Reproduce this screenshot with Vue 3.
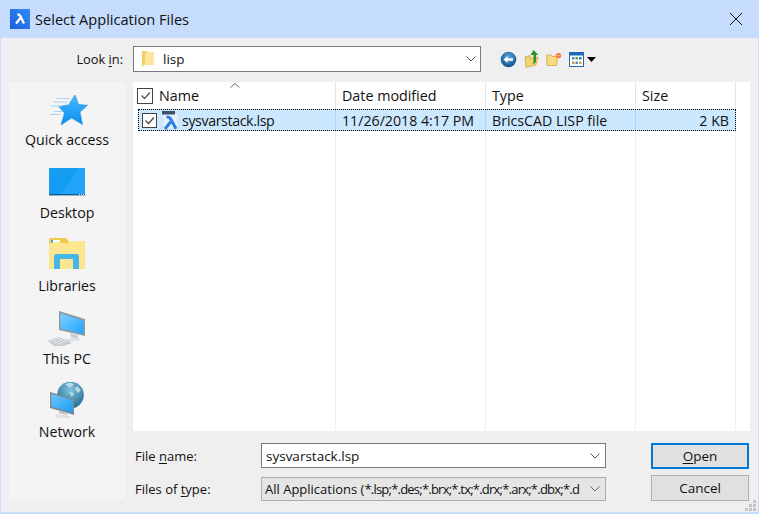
<script setup>
const places = [
  { id: 'quick', label: 'Quick access' },
  { id: 'desktop', label: 'Desktop' },
  { id: 'libraries', label: 'Libraries' },
  { id: 'pc', label: 'This PC' },
  { id: 'network', label: 'Network' }
]
</script>

<template>
  <div class="window">
    <header class="titlebar">
      <svg class="logo" width="20" height="20" viewBox="0 0 20 20">
        <defs>
          <linearGradient id="lg" x1="0" y1="1" x2="1" y2="0">
            <stop offset="0" stop-color="#1d5fe0" />
            <stop offset="1" stop-color="#2f8cf5" />
          </linearGradient>
        </defs>
        <rect width="20" height="20" fill="url(#lg)" />
        <path d="M7.500 5.500c2 0 2.500.8 3 1.800L14 14.500M10.500 9L6 14.500" stroke="#fff" stroke-width="2.300" fill="none" />
      </svg>
      <span class="title">Select Application Files</span>
      <svg class="close" width="14" height="14" viewBox="0 0 14 14">
        <path d="M1 1l12 12M13 1L1 13" stroke="#111" stroke-width="1" fill="none" />
      </svg>
    </header>

    <div class="content">
      <div class="lookin">
        <label class="lookin-label">Look <u>i</u>n:</label>
        <div class="combo lookin-combo">
          <svg class="folder" width="12" height="17" viewBox="0 0 12 17">
            <path d="M0 0h5l1 1.500h6V14H1.500L0 16.500z" fill="#f4cd66" />
            <path d="M3 1.500h9V14H3z" fill="#fde59c" />
          </svg>
          <span class="combo-text">lisp</span>
          <svg class="chev" width="10" height="6" viewBox="0 0 10 6">
            <path d="M.5.500L5 5 9.500.5" stroke="#555" fill="none" />
          </svg>
        </div>
        <div class="tools">
          <svg width="17" height="17" viewBox="0 0 17 17">
            <defs>
              <radialGradient id="bk" cx=".5" cy=".35" r=".7">
                <stop offset="0" stop-color="#5aa6e0" />
                <stop offset="1" stop-color="#0b4a86" />
              </radialGradient>
            </defs>
            <circle cx="8.500" cy="8.500" r="7.800" fill="url(#bk)" />
            <path d="M3.500 8.500l4-3.500v2.300h5.500v2.400H7.500V12z" fill="#fff" />
          </svg>
          <svg width="15" height="18" viewBox="0 0 15 18">
            <path d="M1 7l5-1.500V8l8-1-2 8-10 2.500z" fill="#f3d070" stroke="#c9a04a" stroke-width=".7" />
            <path d="M9.500 0L14.500 5H12v6c0 1.500-1.500 3-3.500 3 1-1 1-2 1-3V5H6.500z" fill="#2f8f2a" />
          </svg>
          <svg width="16" height="14" viewBox="0 0 16 14">
            <path d="M.5 3h5l1 1.500h5L10.500 13.500H1z" fill="#f7d97f" stroke="#c9a04a" stroke-width=".7" />
            <circle cx="12.500" cy="3.500" r="2.600" fill="#ef6a2c" />
            <path d="M12.500 0v7M9 3.500h7" stroke="#f9b27c" stroke-width=".8" />
          </svg>
          <span class="viewbtn">
            <svg width="15" height="15" viewBox="0 0 15 15">
              <rect x=".5" y=".5" width="14" height="14" fill="#fff" stroke="#1c69b8" />
              <rect x="1" y="1" width="13" height="2.500" fill="#1c69b8" />
              <rect x="3" y="5" width="2.500" height="2.500" fill="#3f8fd8" />
              <rect x="6.500" y="5" width="2.500" height="2.500" fill="#5aa94a" />
              <rect x="10" y="5" width="2.500" height="2.500" fill="#2a78c8" />
              <rect x="3" y="9.500" width="2.500" height="2.500" fill="#e28a2a" />
              <rect x="6.500" y="9.500" width="2.500" height="2.500" fill="#3f8fd8" />
              <rect x="10" y="9.500" width="2.500" height="2.500" fill="#d8a02a" />
            </svg>
            <svg width="9" height="5" viewBox="0 0 9 5"><path d="M0 0h9L4.500 5z" fill="#000" /></svg>
          </span>
        </div>
      </div>

      <div class="main">
        <aside class="sidebar">
          <div v-for="p in places" :key="p.id" class="place">
            <svg class="place-icon" width="40" height="40" viewBox="0 0 40 40">
              <template v-if="p.id === 'quick'">
                <defs>
                  <linearGradient id="st" x1="0" y1="0" x2="0" y2="1">
                    <stop offset="0" stop-color="#48b8ff" />
                    <stop offset="1" stop-color="#0a8ff0" />
                  </linearGradient>
                </defs>
                <path d="M27 5l3.500 9.500 9 .8-7.500 6.700 2.500 12.500L23.500 28 13 35l3.500-12-6-6.500 10-1.500z" fill="url(#st)" stroke="#1d8fe0" stroke-width=".6" />
                <path d="M8 8.500h14M6 12h14M3 16h11M6 21.500h9M2 24.500h10" stroke="#9fd0f0" stroke-width=".9" />
              </template>
              <template v-else-if="p.id === 'desktop'">
                <defs>
                  <linearGradient id="dk" x1="0" y1="0" x2="1" y2="1">
                    <stop offset="0" stop-color="#1a9ff2" />
                    <stop offset="1" stop-color="#0a98f5" />
                  </linearGradient>
                </defs>
                <rect x="1" y="5" width="36" height="27" fill="url(#dk)" />
                <path d="M13 31L31 5h6v26z" fill="#2fadfd" opacity=".6" />
                <rect x="1" y="31" width="36" height="1.400" fill="#0a5a92" />
                <path d="M31 31.700h5" stroke="#fff" stroke-dasharray="1 1" />
              </template>
              <template v-else-if="p.id === 'libraries'">
                <path d="M1 4c0-1 1-2 2-2h15l4 5H1z" fill="#f2c94f" />
                <path d="M1 7h20l3-2h13v28H1z" fill="#fde690" />
                <rect x="4" y="4" width="8" height="2.500" fill="#fff" />
                <rect x="3" y="4" width="2" height="2.500" fill="#3ea8dd" />
                <path d="M6 33V21c0-2 1-3 3-3h19c2 0 3 1 3 3v12h-6V23H12v10z" fill="#46b5e8" />
              </template>
              <template v-else-if="p.id === 'pc'">
                <defs>
                  <linearGradient id="pcg" x1="0" y1="0" x2="1" y2="1">
                    <stop offset="0" stop-color="#7fcfff" />
                    <stop offset="1" stop-color="#1ea4ff" />
                  </linearGradient>
                </defs>
                <path d="M11 2l26 8v17l-26-6z" fill="#8a9aa6" />
                <path d="M12.500 4.500l23 7V25l-23-5.500z" fill="url(#pcg)" />
                <path d="M22 24l8 2v4l-7-1z" fill="#c9d0d4" />
                <path d="M17 30l14-1 3 2-14 2z" fill="#dfe3e6" />
                <path d="M0 32l11-4 13 6-9 3H6z" fill="#c6cbcf" />
                <path d="M3 32.500l9-3.500M6 34l9-3.500M9 35.500l9-3.500" stroke="#f2f3f4" stroke-width=".9" />
              </template>
              <template v-else>
                <defs>
                  <radialGradient id="gl" cx=".5" cy=".3" r=".8">
                    <stop offset="0" stop-color="#7fc4dd" />
                    <stop offset="1" stop-color="#1a5e88" />
                  </radialGradient>
                  <linearGradient id="nm" x1="0" y1="0" x2="1" y2="1">
                    <stop offset="0" stop-color="#6cc6fb" />
                    <stop offset="1" stop-color="#1a9cf0" />
                  </linearGradient>
                </defs>
                <circle cx="22.500" cy="13" r="13.300" fill="url(#gl)" />
                <path d="M17 2.500c3-2 7-2 9 0l-4 3zM29 4l4 4-3 3-3-4zM21 10l5 1-2 4z" fill="#cfe7ef" opacity=".8" />
                <path d="M2 10l24 7v16L2 26z" fill="#7b8a96" />
                <path d="M3.500 12l21 6v13L3.500 24.500z" fill="url(#nm)" />
                <path d="M11 29l8 2v2l-8-1.500z" fill="#c3c9cd" />
                <path d="M7 32l13 1.500 3 2.500H9z" fill="#dde1e4" />
              </template>
            </svg>
            <span class="place-label">{{ p.label }}</span>
          </div>
        </aside>

        <div class="right">
          <section class="list">
            <div class="list-head">
              <div class="th th-name">
                <svg class="sort" width="10" height="5" viewBox="0 0 10 5">
                  <path d="M.5 4.500L5 .5l4.500 4" stroke="#666" fill="none" />
                </svg>
                <span class="check head-check">
                  <svg width="13" height="13" viewBox="0 0 13 13"><path d="M2.500 6.500l3 3 5.500-6" stroke="#555" stroke-width="1.300" fill="none" /></svg>
                </span>
                <span>Name</span>
              </div>
              <div class="th th-date">Date modified</div>
              <div class="th th-type">Type</div>
              <div class="th th-size">Size</div>
            </div>
            <div class="rows">
              <div class="row">
                <div class="td td-name">
                  <span class="check row-check">
                    <svg width="13" height="13" viewBox="0 0 13 13"><path d="M2.500 6.500l3 3 5.500-6" stroke="#444" stroke-width="1.300" fill="none" /></svg>
                  </span>
                  <svg class="file-icon" width="17" height="20" viewBox="0 0 17 20">
                    <path d="M1 1h11l4 4v14H1z" fill="#e6f0f9" stroke="#cfdbe6" stroke-width=".6" />
                    <rect x="0" y="1" width="13" height="3.500" fill="#3c4f6b" />
                    <path d="M4.500 7c2.500 0 3.500.7 4 1.800l5.500 10M8.500 12L3 19" stroke="#2b7fe6" stroke-width="3" fill="none" />
                  </svg>
                  <span class="file-name">sysvarstack.lsp</span>
                </div>
                <div class="td td-date">11/26/2018 4:17 PM</div>
                <div class="td td-type">BricsCAD LISP file</div>
                <div class="td td-size">2 KB</div>
              </div>
            </div>
          </section>

          <div class="form">
            <div class="fields">
              <div class="field field-name">
                <label class="field-label">File <u>n</u>ame:</label>
                <div class="combo field-input">
                  <span>sysvarstack.lsp</span>
                  <svg class="chev" width="10" height="6" viewBox="0 0 10 6"><path d="M.5.500L5 5 9.500.5" stroke="#555" fill="none" /></svg>
                </div>
              </div>
              <div class="field field-type">
                <label class="field-label">Files of <u>t</u>ype:</label>
                <div class="combo field-select">
                  <span class="clip">All Applications (<span class="pattern">*.lsp;*.des;*.brx;*.tx;*.drx;*.arx;*.dbx;*.d</span></span>
                  <svg class="chev" width="10" height="6" viewBox="0 0 10 6"><path d="M.5.500L5 5 9.500.5" stroke="#666" fill="none" /></svg>
                </div>
              </div>
            </div>
            <div class="buttons">
              <button class="btn btn-open"><u>O</u>pen</button>
              <button class="btn">Cancel</button>
            </div>
          </div>
        </div>
      </div>
    </div>
    <svg class="grip" width="12" height="12" viewBox="0 0 12 12">
      <path d="M8 0h3v3H8zM4 4h3v3H4zM8 4h3v3H8zM0 8h3v3H0zM4 8h3v3H4zM8 8h3v3H8z" fill="#c4c4c4" />
    </svg>
  </div>
</template>

<style>
html, body { margin: 0; overflow: hidden; }
</style>

<style scoped>
.window {
  position: relative;
  box-sizing: border-box;
  width: 759px;
  height: 514px;
  display: flex;
  flex-direction: column;
  background: #efefef;
  border: solid #c6dcfd;
  border-width: 0 1px 2px 1px;
  font-family: "Open Sans", "Noto Sans", sans-serif;
  font-size: 13.5px;
  color: #111;
  overflow: hidden;
}
svg { display: block; flex: none; }
u { text-underline-offset: 2px; }

.titlebar {
  flex: none;
  height: 38px;
  margin: 0 -1px;
  padding: 0 16px 0 10px;
  display: flex;
  align-items: center;
  background: #c6dcfd;
}
.title { margin-left: 5px; font-size: 14.6px; flex: 1; }

.content { flex: 1; display: flex; flex-direction: column; min-height: 0; }

.lookin {
  flex: none;
  height: 44px;
  display: flex;
  align-items: center;
  padding-bottom: 2px;
  box-sizing: border-box;
}
.lookin-label { width: 122px; text-align: right; margin-right: 10px; font-size: 12.8px; }
.combo {
  box-sizing: border-box;
  display: flex;
  align-items: center;
  background: #fff;
  border: 1px solid #7a7a7a;
}
.lookin-combo { width: 348px; height: 26px; padding: 0 4px 0 8px; }
.folder { margin-right: 9px; }
.combo-text, .clip { flex: 1; }
.chev { margin-left: auto; }
.tools { display: flex; align-items: center; margin-left: 19px; gap: 7px; }
.viewbtn { display: flex; align-items: center; gap: 3px; }

.main { flex: 1; display: flex; min-height: 0; padding-left: 8px; }
.sidebar {
  flex: none;
  width: 116px;
  height: 417px;
  box-sizing: border-box;
  padding-top: 8px;
  background: #f4f4f4;
  display: flex;
  flex-direction: column;
  margin-right: 8px;
}
.place {
  height: 73px;
  display: flex;
  flex-direction: column;
  align-items: center;
  flex: none;
}
.place-icon { margin-left: 2px; }
.place-label { line-height: 20px; font-size: 14.2px; }

.right { width: 617px; flex: none; display: flex; flex-direction: column; }
.list {
  flex: none;
  height: 349px;
  background: #fff;
  display: flex;
  flex-direction: column;
}
.list-head {
  flex: none;
  height: 27px;
  display: flex;
  font-size: 14.3px;
}
.th {
  position: relative;
  box-sizing: border-box;
  border-right: 1px solid #e5e5e5;
  display: flex;
  align-items: center;
  padding-left: 6px;
}
.th-name { width: 203px; padding-left: 4px; }
.th-date { width: 150px; }
.th-type { width: 150px; }
.th-size { width: 100px; }
.sort { position: absolute; left: 97px; top: 1px; }
.check {
  box-sizing: border-box;
  width: 16px;
  height: 16px;
  border: 1px solid #444;
  background: #fff;
  display: flex;
  align-items: center;
  justify-content: center;
}
.head-check { margin-right: 6px; }

.rows {
  flex: 1;
  background-color: #fff;
  background-image:
    linear-gradient(#eef0f2, #eef0f2),
    linear-gradient(#eef0f2, #eef0f2),
    linear-gradient(#eef0f2, #eef0f2),
    linear-gradient(#eef0f2, #eef0f2);
  background-size: 1px 100%;
  background-repeat: no-repeat;
  background-position: 202px 0, 352px 0, 502px 0, 602px 0;
}
.row {
  box-sizing: border-box;
  margin-left: 5px;
  width: 598px;
  height: 22px;
  display: flex;
  background: #cce8ff;
  outline: 1px dotted #000;
  outline-offset: -1px;
  font-size: 14.2px;
}
.td { box-sizing: border-box; display: flex; align-items: center; padding-left: 6px; border-right: 1px solid #a8d6fa; }
.td-name { width: 198px; padding-left: 4px; }
.row-check { margin-right: 5px; width: 15px; height: 15px; }
.file-icon { margin-right: 3px; }
.file-name { letter-spacing: -0.38px; }
.td-date { width: 150px; }
.td-type { width: 150px; }
.td-size { width: 100px; justify-content: flex-end; padding-right: 7px; border-right: 0; }

.form { flex: 1; display: flex; padding-top: 12px; box-sizing: border-box; }
.fields { flex: none; width: 473px; display: flex; flex-direction: column; gap: 9px; }
.field { display: flex; align-items: center; padding-left: 2px; }
.field-label { width: 126px; font-size: 13px; }
.field-input { width: 345px; height: 25px; padding: 0 5px 0 4px; }
.field-select { width: 345px; height: 24px; padding: 0 5px 0 3px; background: #e5e5e5; border-color: #acacac; font-size: 13px; }
.clip { white-space: nowrap; }
.pattern { letter-spacing: -0.78px; }
.buttons { margin-left: 45px; display: flex; flex-direction: column; gap: 6px; }
.btn {
  box-sizing: border-box;
  width: 98px;
  height: 26px;
  padding: 0;
  background: #e1e1e1;
  border: 1px solid #adadad;
  font: inherit;
  font-size: 13.5px;
  color: #111;
}
.btn-open { border: 2px solid #0078d7; }
.grip { position: absolute; right: 1px; bottom: 0; }
</style>
